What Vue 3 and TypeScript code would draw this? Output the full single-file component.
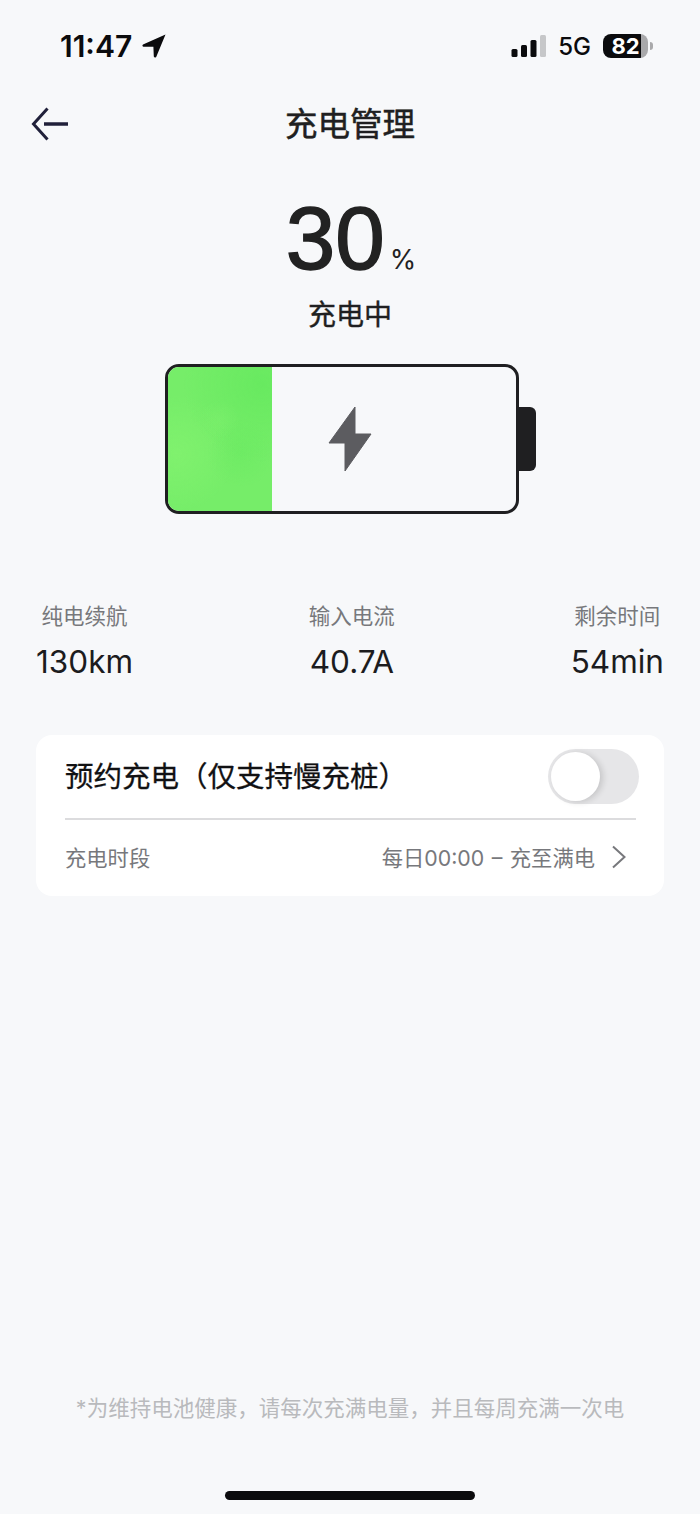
<script setup lang="ts">
interface Stat {
  label: string;
  value: string;
}

const stats: Stat[] = [
  { label: "纯电续航", value: "130km" },
  { label: "输入电流", value: "40.7A" },
  { label: "剩余时间", value: "54min" },
];

const level = 30;
</script>

<template>
  <div class="page">
    <div class="status-bar">
      <div class="status-left">
        <span class="clock">11:47</span>
        <svg class="location" width="24" height="24" viewBox="0 0 24 24">
          <path d="M23.5 0.5 L1 10.6 Q-0.4 12.2 1.4 12.8 L11.4 12.8 L11.8 22.6 Q12.6 24.4 14.2 23 Z" fill="#0b0b0d" />
        </svg>
      </div>
      <div class="status-right">
        <svg class="signal" width="36" height="24" viewBox="0 0 36 24">
          <rect x="0.5" y="15" width="6" height="8" rx="1.5" fill="#0b0b0d" />
          <rect x="10" y="11" width="6" height="12" rx="1.5" fill="#0b0b0d" />
          <rect x="19.5" y="6" width="6" height="17" rx="1.5" fill="#0b0b0d" />
          <rect x="29" y="1" width="6" height="22" rx="1.5" fill="#c6c7c9" />
        </svg>
        <span class="network">5G</span>
        <div class="phone-battery">
          <div class="phone-battery-body"><span>82</span></div>
          <div class="phone-battery-tip"></div>
        </div>
      </div>
    </div>

    <header class="nav">
      <svg class="back" width="38" height="36" viewBox="0 0 38 36" fill="none" stroke="#20203a" stroke-width="3">
        <path d="M16.5 2.5 L2.5 18 L16.5 33.5" />
        <path d="M13 18 H37" stroke-width="3.5" />
      </svg>
      <h1>充电管理</h1>
    </header>

    <section class="level">
      <div class="percent"><span class="number">{{ level }}</span><span class="unit">%</span></div>
      <div class="state">充电中</div>
    </section>

    <div class="battery">
      <div class="battery-body">
        <div class="battery-fill" :style="{ width: level + '%' }"></div>
        <svg class="bolt" width="44" height="66" viewBox="0 0 44 66">
          <path d="M27 1 L27 28 H43 L17 65 L17 37 H1 Z" fill="#5c5c60" stroke="#5c5c60" stroke-width="1" stroke-linejoin="round" />
        </svg>
      </div>
      <div class="battery-tip"></div>
    </div>

    <section class="stats">
      <div v-for="stat in stats" :key="stat.label" class="stat">
        <div class="stat-label">{{ stat.label }}</div>
        <div class="stat-value">{{ stat.value }}</div>
      </div>
    </section>

    <section class="card">
      <div class="card-top">
        <span class="card-title">预约充电（仅支持慢充桩）</span>
        <div class="toggle"><div class="knob"></div></div>
      </div>
      <div class="card-bottom">
        <span>充电时段</span>
        <div class="card-value">
          <span class="period">每日00:00 – 充至满电</span>
          <svg width="16" height="24" viewBox="0 0 16 24" fill="none" stroke="#77787c" stroke-width="2">
            <path d="M2 1.5 L13.5 12 L2 22.5" />
          </svg>
        </div>
      </div>
    </section>

    <p class="note">*为维持电池健康，请每次充满电量，并且每周充满一次电</p>

    <div class="home-bar"></div>
  </div>
</template>

<style>
body {
  background: #f7f8fa;
}
</style>

<style scoped>
.page {
  width: 700px;
  height: 1514px;
  display: flex;
  flex-direction: column;
  background: #f7f8fa;
  font-family: Inter, "Noto Sans CJK SC", sans-serif;
  color: #222;
}

.status-bar {
  height: 92px;
  display: flex;
  align-items: center;
  justify-content: space-between;
  padding: 0 47px 0 60px;
  flex-shrink: 0;
}

.status-left,
.status-right {
  display: flex;
  align-items: center;
}

.clock {
  font-size: 30px;
  font-weight: 600;
  color: #0b0b0d;
}

.location {
  margin-left: 10px;
}

.signal {
  margin-right: 11px;
}

.network {
  font-size: 24px;
  font-weight: 500;
  color: #0b0b0d;
  margin-right: 12px;
}

.phone-battery {
  display: flex;
  align-items: center;
}

.phone-battery-body {
  width: 45px;
  height: 24px;
  border-radius: 8px;
  background: linear-gradient(90deg, #0b0b0d 84%, #a9a9ab 84%);
  display: flex;
  align-items: center;
  justify-content: center;
}

.phone-battery-body span {
  color: #fff;
  font-size: 22px;
  font-weight: 700;
  line-height: 24px;
}

.phone-battery-tip {
  width: 3px;
  height: 8px;
  margin-left: 2px;
  border-radius: 0 3px 3px 0;
  background: #a9a9ab;
}

.nav {
  height: 64px;
  position: relative;
  display: flex;
  align-items: center;
  justify-content: center;
  flex-shrink: 0;
}

.back {
  position: absolute;
  left: 31px;
  top: 14px;
}

.nav h1 {
  margin: 0 0 6px;
  font-size: 32.5px;
  font-weight: 400;
  color: #1f1f21;
  -webkit-text-stroke: 0.5px #1f1f21;
}

.level {
  margin-top: 34px;
  display: flex;
  flex-direction: column;
  align-items: center;
}

.percent {
  display: flex;
  align-items: baseline;
  height: 96px;
  line-height: 96px;
  margin-left: 2px;
  color: #222;
}

.number {
  font-family: "Liberation Sans", sans-serif;
  font-size: 89px;
  -webkit-text-stroke: 1.5px #222;
}

.unit {
  font-size: 27px;
  margin-left: 5px;
}

.state {
  margin-top: 9px;
  font-size: 28px;
  font-weight: 400;
  line-height: 40px;
  color: #1f1f21;
  -webkit-text-stroke: 0.4px #1f1f21;
}

.battery {
  margin: 29px 0 0 165px;
  display: flex;
  align-items: center;
}

.battery-body {
  position: relative;
  width: 354px;
  height: 150px;
  box-sizing: border-box;
  border: 3px solid #1f1f21;
  border-radius: 14px;
  overflow: hidden;
  display: flex;
  align-items: center;
  justify-content: center;
}

.battery-fill {
  position: absolute;
  left: 0;
  top: 0;
  bottom: 0;
  background:
    radial-gradient(circle at 50% 36%, rgba(130, 242, 112, 0.35), transparent 18%),
    radial-gradient(circle at 90% 12%, rgba(98, 232, 92, 0.7), transparent 50%),
    radial-gradient(circle at 70% 60%, rgba(104, 234, 96, 0.5), transparent 30%),
    radial-gradient(circle at 8% 60%, rgba(132, 243, 112, 0.7), transparent 45%),
    #76ed69;
}

.bolt {
  position: relative;
  margin-left: 16px;
}

.battery-tip {
  width: 17px;
  height: 64px;
  background: #1f1f21;
  border-radius: 0 6px 6px 0;
}

.stats {
  margin-top: 87px;
  padding: 0 36px;
  display: flex;
  justify-content: space-between;
}

.stat {
  display: flex;
  flex-direction: column;
  align-items: center;
}

.stat-label {
  font-size: 21.5px;
  line-height: 30px;
  color: #77787c;
}

.stat-value {
  margin-top: 12px;
  font-size: 31.5px;
  line-height: 38px;
  font-weight: 430;
  color: #1c1c1e;
}

.card {
  margin: 54px 36px 0;
  height: 161px;
  box-sizing: border-box;
  padding: 0 28px 0 29px;
  background: #fff;
  border-radius: 16px;
  display: flex;
  flex-direction: column;
}

.card-top {
  height: 83px;
  flex-shrink: 0;
  display: flex;
  align-items: center;
  justify-content: space-between;
  border-bottom: 2px solid #dcdcde;
}

.card-title {
  margin-bottom: 5px;
  font-size: 28.5px;
  font-weight: 400;
  color: #111113;
  -webkit-text-stroke: 0.3px #111113;
}

.toggle {
  width: 91px;
  height: 55px;
  margin-right: -3px;
  border-radius: 28px;
  background: #e6e6e8;
  flex-shrink: 0;
  display: flex;
  align-items: center;
  padding-left: 3px;
  box-sizing: border-box;
}

.knob {
  width: 49px;
  height: 49px;
  border-radius: 50%;
  background: #fff;
  box-shadow: 3px 1px 6px rgba(0, 0, 0, 0.14);
}

.card-bottom {
  flex: 1;
  padding-bottom: 3px;
  display: flex;
  align-items: center;
  justify-content: space-between;
  font-size: 21.3px;
  color: #77787c;
}

.card-value {
  display: flex;
  align-items: center;
  gap: 16px;
  margin-right: 9px;
}

.period {
  word-spacing: 1.5px;
}

.note {
  margin: auto 0 0;
  text-align: center;
  font-size: 21.5px;
  line-height: 30px;
  color: #b9babd;
}

.home-bar {
  width: 250px;
  height: 9px;
  margin: 68px auto 14px;
  border-radius: 5px;
  background: #0b0b0d;
  flex-shrink: 0;
}
</style>
